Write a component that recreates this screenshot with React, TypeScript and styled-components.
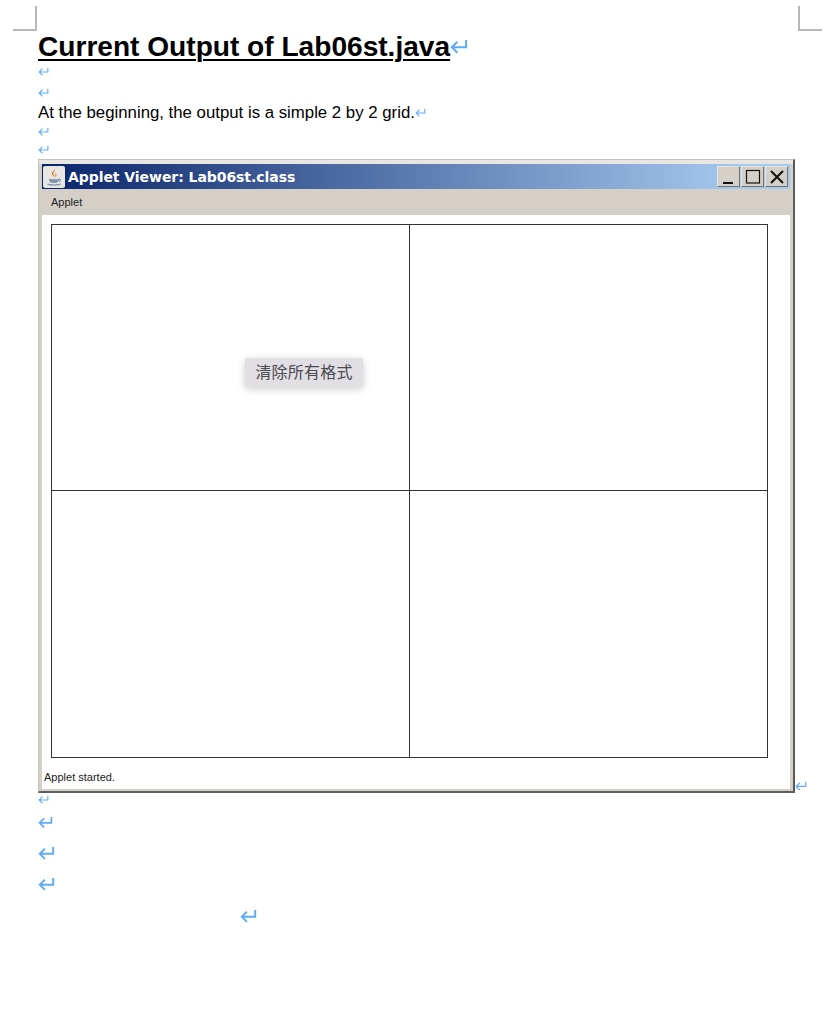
import styled, { createGlobalStyle } from "styled-components";

const GlobalStyle = createGlobalStyle`
  html, body {
    margin: 0;
    padding: 0;
    background: #fff;
  }
  body {
    font-family: "Liberation Sans", Arial, sans-serif;
    color: #000;
    overflow: hidden;
  }
`;

const ReturnMark = ({ size }: { size: number }) => (
  <MarkSvg width={size} height={size * 0.85} viewBox="0 0 16 14" aria-hidden="true">
    <path
      d="M14.500 1v6.500H2M6.500 2.500 1.500 7.500l5 5"
      fill="none"
      stroke="#5fabf7"
      strokeWidth={size > 12 ? 1.9 : 1.7}
    />
  </MarkSvg>
);

const JavaIcon = () => (
  <IconBox>
    <svg width="20" height="20" viewBox="0 0 18 18" aria-hidden="true">
      <path d="M9.500 1.500c1.500 2-2 3-1 5.500.4.800 1 1.300 1 2-1.500-1-3-2.200-2.300-4C7.800 3.800 9.800 3.200 9.500 1.500z" fill="#d9772b" />
      <path d="M11.500 5c-1.500.8-2 1.500-1.300 3 .2.500.3.800.1 1.300 1.500-1.200 1-2.600.3-3.100-.2-.4.200-.8.900-1.200z" fill="#e08a3c" />
      <path d="M4.500 10.500c2 .6 7 .6 9 0v1c-.3 2-1.800 3-4.500 3s-4.200-1-4.500-3z" fill="#7d90ac" />
      <path d="M13.500 11c1.500-.4 2 1.300.2 2" fill="none" stroke="#7d90ac" />
      <path d="M3 15.500c3 1 9 1 12 0" fill="none" stroke="#8197b5" strokeWidth="1.200" />
    </svg>
  </IconBox>
);

export default function App() {
  return (
    <Page>
      <GlobalStyle />
      <CropRow>
        <CropMark side="left" />
        <CropMark side="right" />
      </CropRow>
      <Sheet>
        <HeadingRow>
          <Heading>Current Output of Lab06st.java</Heading>
          <ReturnMark size={18} />
        </HeadingRow>
        <Line height={20}>
          <ReturnMark size={11} />
        </Line>
        <Line height={21}>
          <ReturnMark size={11} />
        </Line>
        <TextLine>
          At the beginning, the output is a simple 2 by 2 grid.
          <ReturnMark size={11} />
        </TextLine>
        <Line height={17}>
          <ReturnMark size={11} />
        </Line>
        <Line height={19}>
          <ReturnMark size={11} />
        </Line>
        <WindowRow>
          <AppletWindow>
            <TitleBar>
              <JavaIcon />
              <TitleText>Applet Viewer: Lab06st.class</TitleText>
              <TitleButtons>
                <TitleButton>
                  <svg width="16" height="16" viewBox="0 0 16 16" aria-hidden="true">
                    <path d="M2 14h10" stroke="#111" strokeWidth="2" />
                  </svg>
                </TitleButton>
                <TitleButton>
                  <svg width="16" height="16" viewBox="0 0 16 16" aria-hidden="true">
                    <rect x="1.500" y="1.500" width="13" height="12.500" fill="none" stroke="#111" strokeWidth="1.200" />
                  </svg>
                </TitleButton>
                <TitleButton>
                  <svg width="16" height="16" viewBox="0 0 16 16" aria-hidden="true">
                    <path d="M2 2l12 12M14 2L2 14" stroke="#111" strokeWidth="2" />
                  </svg>
                </TitleButton>
              </TitleButtons>
            </TitleBar>
            <MenuBar>Applet</MenuBar>
            <ClientArea>
              <Grid>
                <Cell />
                <Cell />
                <Cell />
                <Cell />
              </Grid>
              <ClearButton>清除所有格式</ClearButton>
              <StatusText>Applet started.</StatusText>
            </ClientArea>
          </AppletWindow>
          <WindowMark>
            <ReturnMark size={12} />
          </WindowMark>
        </WindowRow>
        <Line height={14}>
          <ReturnMark size={11} />
        </Line>
        <Line height={31}>
          <ReturnMark size={15} />
        </Line>
        <Line height={31}>
          <ReturnMark size={17} />
        </Line>
        <Line height={31}>
          <ReturnMark size={17} />
        </Line>
        <Line height={32} indent={202}>
          <ReturnMark size={17} />
        </Line>
      </Sheet>
    </Page>
  );
}

const Page = styled.div`
  width: 839px;
  height: 1024px;
  overflow: hidden;
  background: #fff;
`;

const CropRow = styled.div`
  display: flex;
  justify-content: space-between;
  height: 31px;
  padding: 6px 17px 0 13px;
  box-sizing: border-box;
`;

const CropMark = styled.div<{ side: "left" | "right" }>`
  width: 24px;
  height: 25px;
  box-sizing: border-box;
  border-bottom: 2.5px solid #b8b8b8;
  ${({ side }) => (side === "left" ? "border-right" : "border-left")}: 2.5px solid #b8b8b8;
`;

const Sheet = styled.div`
  display: flex;
  flex-direction: column;
  padding-left: 38px;
`;

const MarkSvg = styled.svg`
  display: block;
  flex: none;
`;

const HeadingRow = styled.div`
  display: flex;
  align-items: center;
  height: 31px;
`;

const Heading = styled.h1`
  margin: 0;
  font-size: 28.100px;
  line-height: 31px;
  font-weight: 700;
  text-decoration: underline;
  text-decoration-thickness: 2px;
  text-underline-offset: 3px;
  color: #000;
  white-space: nowrap;
`;

const Line = styled.div<{ height: number; indent?: number }>`
  display: flex;
  align-items: center;
  height: ${({ height }) => height}px;
  padding-left: ${({ indent }) => indent ?? 0}px;
`;

const TextLine = styled.div`
  display: flex;
  align-items: center;
  height: 20px;
  font-size: 16.800px;
  white-space: nowrap;
`;

const WindowRow = styled.div`
  display: flex;
  align-items: flex-end;
`;

const WindowMark = styled.div`
  padding-bottom: 2px;
`;

const AppletWindow = styled.div`
  position: relative;
  display: flex;
  flex-direction: column;
  width: 757px;
  height: 634px;
  box-sizing: border-box;
  background: linear-gradient(#e8e6e2 0 4px, #d4d0c8 4px);
  border-top: 1px solid #c4c2bc;
  border-left: 1px solid #c4c2bc;
  border-right: 2px solid #5a5a5a;
  border-bottom: 2px solid #5f5f5f;
  padding: 4px 3px 2px 3px;
`;

const TitleBar = styled.div`
  display: flex;
  align-items: center;
  gap: 3px;
  height: 25px;
  flex: none;
  padding: 0 2px 0 1px;
  box-sizing: border-box;
  background: linear-gradient(90deg, #0a246a 0%, #a6caf0 94%);
`;

const IconBox = styled.div`
  display: flex;
  align-items: center;
  justify-content: center;
  width: 22px;
  height: 22px;
  border-radius: 2px;
  background: #e8e6e2;
`;

const TitleText = styled.span`
  flex: 1;
  font-family: "DejaVu Sans", Verdana, sans-serif;
  font-size: 14px;
  font-weight: 700;
  letter-spacing: -0.060px;
  color: #fff;
  white-space: nowrap;
`;

const TitleButtons = styled.div`
  display: flex;
  gap: 1px;
`;

const TitleButton = styled.div`
  display: flex;
  align-items: center;
  justify-content: center;
  width: 23px;
  height: 21px;
  box-sizing: border-box;
  background: #d4d0c8;
  border: 1px solid;
  border-color: #e8e6e2 #75736e #75736e #e8e6e2;
`;

const MenuBar = styled.div`
  display: flex;
  align-items: center;
  height: 26px;
  flex: none;
  padding-left: 9px;
  box-sizing: border-box;
  font-size: 11px;
  color: #222;
`;

const ClientArea = styled.div`
  position: relative;
  flex: 1;
  display: flex;
  flex-direction: column;
  background: #fff;
  padding: 9px 0 0 9px;
`;

const Grid = styled.div`
  display: grid;
  grid-template-columns: 358px 1fr;
  grid-template-rows: 1fr 1fr;
  width: 717px;
  height: 534px;
  box-sizing: border-box;
  border: 1px solid #333;
`;

const Cell = styled.div`
  box-sizing: border-box;
  &:nth-child(odd) {
    border-right: 1px solid #333;
  }
  &:nth-child(-n + 2) {
    border-bottom: 1px solid #333;
  }
`;

const ClearButton = styled.div`
  position: absolute;
  left: 203px;
  top: 143px;
  width: 118px;
  height: 29px;
  display: flex;
  align-items: center;
  justify-content: center;
  box-sizing: border-box;
  padding-bottom: 4px;
  border-radius: 2px;
  background: #e1dfe4;
  box-shadow: 0 2px 8px rgba(0, 0, 0, 0.2);
  font-family: "Noto Sans CJK SC", sans-serif;
  font-size: 16px;
  letter-spacing: 0.2px;
  color: #4a4a4f;
`;

const StatusText = styled.div`
  margin: 12px 0 0 -7px;
  font-size: 11px;
  line-height: 14px;
  color: #222;
`;
